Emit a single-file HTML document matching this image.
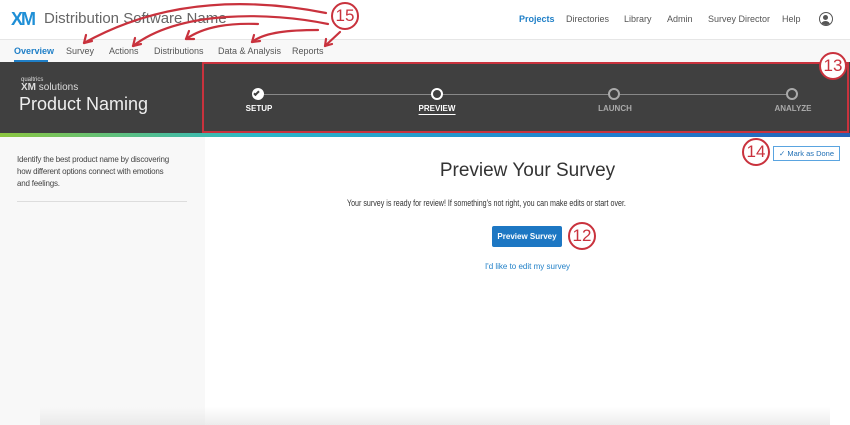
<!DOCTYPE html>
<html><head><style>
*{margin:0;padding:0;box-sizing:border-box}
body{width:850px;height:425px;overflow:hidden;font-family:"Liberation Sans",sans-serif;background:#fff;position:relative}
.hdr{position:absolute;top:0;left:0;width:850px;height:40px;background:#fff;border-bottom:1px solid #e6e6e6}
.logo{position:absolute;left:11px;top:9px;font-weight:bold;font-size:18px;color:#1f8fd6;letter-spacing:-2px}
.title{position:absolute;left:44px;top:10px;font-size:15px;color:#666}
.nav{position:absolute;top:14px;font-size:9px;color:#555}
.tabs{position:absolute;top:40px;left:0;width:850px;height:22px;background:#f8f8f8}
.tab{position:absolute;top:6px;font-size:9px;color:#555}
.dark{position:absolute;top:62px;left:0;width:850px;height:72px;background:#404040}
.grad{position:absolute;top:133px;left:0;width:850px;height:4px;background:linear-gradient(90deg,#8cc63f,#2ab8c8 30%,#1e7fd0 70%,#2462b5)}
.side{position:absolute;top:137px;left:0;width:205px;height:288px;background:#f8f8f8}
.red{position:absolute;left:202px;top:62px;width:647px;height:71px;border:2.5px solid #c9323d}
.step{position:absolute;top:104px;font-size:8px;font-weight:bold;color:#fff;transform:translateX(-50%)}
.dot{position:absolute;top:88px;width:12px;height:12px;border-radius:50%;border:2px solid #fff;background:#404040;transform:translateX(-50%)}
.num{position:absolute;width:28px;height:28px;border-radius:50%;border:2.5px solid #c9323d;background:#fff;color:#c9323d;font-size:17px;text-align:center;line-height:23px;transform:translate(-50%,-50%)}
</style></head><body>
<div class="hdr">
<div class="logo">XM</div>
<div class="title">Distribution Software Name</div>
<div class="nav" style="left:519px;color:#1f7fc7;font-weight:bold">Projects</div>
<div class="nav" style="left:566px">Directories</div>
<div class="nav" style="left:624px">Library</div>
<div class="nav" style="left:667px">Admin</div>
<div class="nav" style="left:708px">Survey Director</div>
<div class="nav" style="left:782px">Help</div>
<div style="position:absolute;left:819px;top:12px;width:14px;height:14px;border-radius:50%;border:1.5px solid #555;overflow:hidden"><div style="position:absolute;left:3px;top:2px;width:5px;height:5px;border-radius:50%;background:#555"></div><div style="position:absolute;left:1px;top:8px;width:9px;height:8px;border-radius:50%;background:#555"></div></div>
</div>
<div class="tabs">
<div class="tab" style="left:14px;color:#1f7fc7;font-weight:bold">Overview</div>
<div style="position:absolute;left:14px;top:20px;width:34px;height:2px;background:#1f7fc7"></div>
<div class="tab" style="left:66px">Survey</div>
<div class="tab" style="left:109px">Actions</div>
<div class="tab" style="left:154px">Distributions</div>
<div class="tab" style="left:218px">Data &amp; Analysis</div>
<div class="tab" style="left:292px">Reports</div>
</div>
<div class="dark">
<div style="position:absolute;left:21px;top:15px;font-size:6px;color:#ddd">qualtrics</div>
<div style="position:absolute;left:21px;top:20px;font-size:10px;color:#ddd"><b>XM</b> solutions</div>
<div style="position:absolute;left:19px;top:32px;font-size:18px;color:#eee">Product Naming</div>
</div>
<div style="position:absolute;left:258px;top:94px;width:534px;height:1px;background:#888"></div>
<div class="dot" style="left:258px;background:#fff;border-color:#fff"></div>
<div style="position:absolute;left:255px;top:90px;width:3px;height:6px;border:solid #404040;border-width:0 2px 2px 0;transform:rotate(45deg)"></div>
<div class="dot" style="left:437px"></div>
<div class="dot" style="left:614px;border-color:#aaa"></div>
<div class="dot" style="left:792px;border-color:#aaa"></div>
<div class="step" style="left:259px">SETUP</div>
<div class="step" style="left:437px;border-bottom:1.5px solid #fff;padding-bottom:1px">PREVIEW</div>
<div class="step" style="left:615px;color:#aaa">LAUNCH</div>
<div class="step" style="left:793px;color:#aaa">ANALYZE</div>
<div class="red"></div>
<div class="grad"></div>
<div class="side">
<div style="position:absolute;left:17px;top:17px;white-space:nowrap;font-size:8px;line-height:12px;color:#444;letter-spacing:-0.2px">Identify the best product name by discovering<br>how different options connect with emotions<br>and feelings.</div>
<div style="position:absolute;left:17px;top:64px;width:170px;height:1px;background:#ddd"></div>
</div>
<div style="position:absolute;left:205px;top:160px;width:645px;text-align:center;font-size:19px;color:#333">Preview Your Survey</div>
<div style="position:absolute;left:347px;top:198px;white-space:nowrap;font-size:9px;color:#333;transform:scaleX(0.79);transform-origin:0 0">Your survey is ready for review! If something's not right, you can make edits or start over.</div>
<div style="position:absolute;left:492px;top:226px;width:70px;height:21px;background:#1d77c3;color:#fff;font-size:8px;font-weight:bold;text-align:center;line-height:21px;border-radius:2px">Preview Survey</div>
<div style="position:absolute;left:205px;top:262px;width:645px;text-align:center;font-size:8px;color:#1f7fc7">I'd like to edit my survey</div>
<div style="position:absolute;left:773px;top:146px;width:67px;height:15px;border:1px solid #5aa4e0;font-size:7.5px;color:#1f6fb5;line-height:13px;text-align:center;background:#fff">✓ Mark as Done</div>
<div style="position:absolute;left:40px;bottom:0;width:790px;height:18px;background:linear-gradient(#fff0,#e4e4e4);opacity:.7"></div>
<svg width="850" height="425" style="position:absolute;left:0;top:0" fill="none" stroke="#c9323d" stroke-width="2.2" stroke-linecap="round">
<path d="M326 13 C260 0 170 -5 84 43"/><path d="M84 43 l2 -8 M84 43 l8 -2"/>
<path d="M328 24 C270 12 180 10 133 46"/><path d="M133 46 l2 -8 M133 46 l8 -2"/>
<path d="M258 24 C230 23 205 26 186 39"/><path d="M186 39 l3 -8 M186 39 l8 0"/>
<path d="M318 30 C290 30 265 32 252 42"/><path d="M252 42 l2 -7 M252 42 l8 -1"/>
<path d="M340 32 L325 46"/><path d="M325 46 l1 -7 M325 46 l7 -2"/>
</svg>
<div class="num" style="left:345px;top:16px">15</div>
<div class="num" style="left:833px;top:66px">13</div>
<div class="num" style="left:756px;top:152px">14</div>
<div class="num" style="left:582px;top:236px">12</div>
</body></html>
